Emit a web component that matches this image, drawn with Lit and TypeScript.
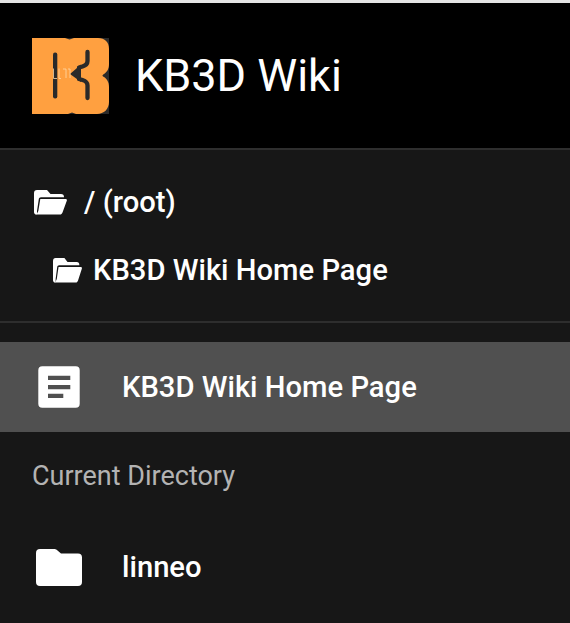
import { LitElement, html, css, svg } from "lit";
import { customElement } from "lit/decorators.js";

const folderOpen = svg`<path d="M0 3a3 3 0 0 1 3-3h10l3.500 4H27a3 3 0 0 1 3 3v.2H7C5.800 7.200 5 8 4.800 9L3 21V24.600H2.500C.8 24.600 0 23.500 0 22z"/><path d="M6.300 8.900H31.500c1 0 1.700.8 1.300 1.800L28.500 22.500c-.5 1.300-1.300 2.100-2.700 2.100H2.500L4.300 21z"/>`;

@customElement("app-root")
export class AppRoot extends LitElement {
  static styles = css`
    :host {
      display: block;
      width: 570px;
      height: 623px;
      overflow: hidden;
      background: #171717;
      color: #fff;
      font-family: Roboto, "Liberation Sans", sans-serif;
      border-top: 3px solid #e4e4e4;
      box-sizing: border-box;
    }
    .header {
      height: 145px;
      background: #000;
      border-bottom: 2px solid #2e2e2e;
      display: flex;
      align-items: center;
      padding-left: 32px;
      gap: 26px;
    }
    .logo { width: 77px; height: 76px; display: block; flex: none; }
    .title { font-size: 45px; font-weight: 400; line-height: 1; }
    .tree {
      height: 171px;
      border-bottom: 2px solid #2e2e2e;
      display: flex;
      flex-direction: column;
      padding-left: 34px;
    }
    .crumb {
      display: flex;
      align-items: center;
      height: 68px;
      font-size: 29.2px;
      font-weight: 500;
    }
    .crumb.one { margin-top: 18px; gap: 17px; }
    .crumb.two { padding-left: 19px; gap: 11px; }
    .crumb svg { width: 33px; height: 25px; fill: #fff; flex: none; }
    .crumb.two svg { width: 29px; }
    .item {
      display: flex;
      align-items: center;
      height: 90px;
      font-size: 29.2px;
      font-weight: 500;
      padding-left: 38px;
    }
    .item.active { background: #505050; margin-top: 19px; }
    .item svg { fill: #fff; flex: none; display: block; }
    .icon { width: 84px; flex: none; display: flex; }
    .folder { margin-left: -2px; }
    .sub {
      height: 90px;
      padding-left: 32px;
      font-size: 27px;
      line-height: 88px;
      color: #b3b3b3;
      font-weight: 400;
    }
  `;

  render() {
    return html`
      <div class="header">
        <svg class="logo" viewBox="0 0 77 76">
          <rect width="77" height="76" fill="#2a2a2a" />
          <path fill="#ffa040" d="M0 0H33l4.500 1.500L42 0H66C73 0 77 4 77 11V26c0 5-2 8-5 10-.5.500-1.500.800-1.500 1.500s1 1.200 1.500 1.500c3 2 5 5 5 10V64c0 7-5 12-12 12H44l-4-1.500L36 76H0z" />
          <rect x="21" y="14.500" width="4.300" height="46" rx="2" fill="#2a2a2a" />
          <path fill="#2a2a2a" d="M38 36L49 26.500V44z" />
          <path fill="none" stroke="#2a2a2a" stroke-width="4.300" stroke-linecap="round" d="M55.500 14V23q0 4-5 5.500L47 29.500M47 41l3.500 1q5 1.500 5 5.500V60" />
          <path fill="none" stroke="#ffd9a8" stroke-width=".8" d="M21.500 30.500v10h3.500M27 30.500v10h2M31 31h3v9M36 31h2v9" />
        </svg>
        <div class="title">KB3D Wiki</div>
      </div>
      <div class="tree">
        <div class="crumb one"><svg viewBox="0 0 33 25">${folderOpen}</svg><span>/ (root)</span></div>
        <div class="crumb two"><svg viewBox="0 0 33 25" preserveAspectRatio="none">${folderOpen}</svg><span>KB3D Wiki Home Page</span></div>
      </div>
      <div class="item active">
        <div class="icon">
          <svg width="42" height="42" viewBox="0 0 42 42">
            <path fill-rule="evenodd" d="M4.300 .3h33.400a4 4 0 0 1 4 4v33.400a4 4 0 0 1-4 4H4.300a4 4 0 0 1-4-4V4.300a4 4 0 0 1 4-4zM10 9.700v4.300h22.300V9.700zM10 19v4.200h22.300V19zM10 27.700v4.300h15.300v-4.300z" />
          </svg>
        </div>
        <span>KB3D Wiki Home Page</span>
      </div>
      <div class="sub">Current Directory</div>
      <div class="item">
        <div class="icon">
          <svg class="folder" width="46" height="37" viewBox="0 0 46 37">
            <path d="M4 0h14c1.500 0 2.500.5 3.500 1.500L25 4.500H42a4 4 0 0 1 4 4V33a4 4 0 0 1-4 4H4a4 4 0 0 1-4-4V4a4 4 0 0 1 4-4z" />
          </svg>
        </div>
        <span>linneo</span>
      </div>
    `;
  }
}
